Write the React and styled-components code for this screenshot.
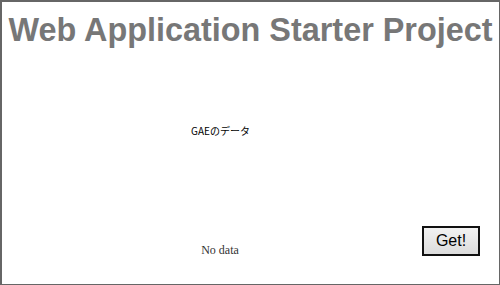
import React from 'react';
import styled, { createGlobalStyle } from 'styled-components';

const Global = createGlobalStyle`
  html, body { margin: 0; padding: 0; background: #fff; }
`;

const Frame = styled.div`
  width: 500px;
  height: 285px;
  box-sizing: border-box;
  border: 2px solid #666;
  border-right-width: 1px;
  border-bottom-width: 1px;
  display: flex;
  flex-direction: column;
  overflow: hidden;
`;

const Title = styled.h1`
  margin: 8px 0 0;
  font-family: "Liberation Sans", Arial, sans-serif;
  font-weight: bold;
  font-size: 32.4px;
  line-height: 40px;
  color: #777;
  text-align: center;
  white-space: nowrap;
`;

const Body = styled.div`
  flex: 1;
  display: grid;
  grid-template-columns: 419px 1fr;
  grid-template-rows: 1fr auto;
`;

const Label = styled.div`
  grid-column: 1;
  padding: 73px 0 0 18px;
  text-align: center;
  font-family: "Noto Sans CJK JP", "Noto Sans", sans-serif;
  font-size: 10px;
  color: #000;
`;

const Result = styled.div`
  grid-column: 1;
  grid-row: 2;
  text-align: center;
  padding: 0 0 26px 17px;
  font-family: "Liberation Serif", "Times New Roman", serif;
  font-size: 12px;
  color: #333;
`;

const ButtonCell = styled.div`
  grid-column: 2;
  grid-row: 1 / span 2;
  display: flex;
  align-items: flex-end;
  padding-bottom: 28px;
  padding-left: 1px;
`;

const GetButton = styled.button`
  width: 58px;
  height: 30px;
  border: 2px solid #111;
  background: linear-gradient(#f2f2f2, #dcdcdc);
  font-family: "Liberation Sans", Arial, sans-serif;
  font-size: 16px;
  color: #000;
  padding: 0;
`;

export default function App() {
  return (
    <>
      <Global />
      <Frame>
        <Title>Web Application Starter Project</Title>
        <Body>
          <Label>GAEのデータ</Label>
          <Result>No data</Result>
          <ButtonCell>
            <GetButton>Get!</GetButton>
          </ButtonCell>
        </Body>
      </Frame>
    </>
  );
}
